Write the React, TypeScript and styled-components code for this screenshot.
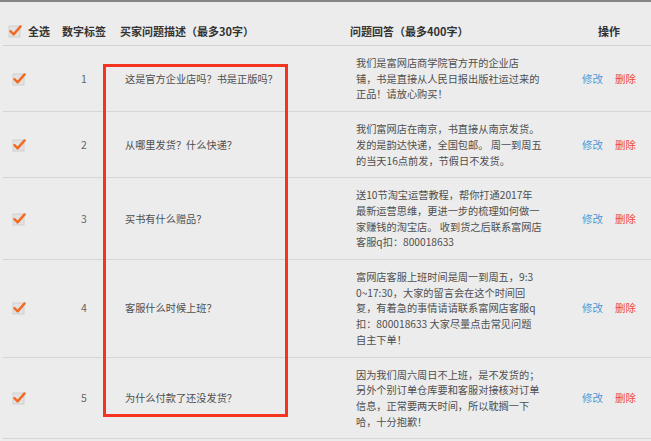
import styled, { createGlobalStyle } from "styled-components";

const GlobalStyle = createGlobalStyle`
    html, body {
        margin: 0;
        padding: 0;
        background-color: #ececec;
    }
    body {
        font-family: "Noto Sans CJK SC", "Noto Sans", sans-serif;
        color: #4f4f4f;
    }
`

const Page = styled.div`
    position: relative;
    width: 651px;
    height: 441px;
    overflow: hidden;
    border-top: 2px solid #858585;
    box-sizing: border-box;
    background-color: #ececec;
`

const Table = styled.div`
    margin-left: 3px;
    width: 648px;
`

const Header = styled.div`
    display: grid;
    grid-template-columns: 47px 68px 227px 225px 78px;
    padding: 22px 0 7px;
    border-bottom: 1px solid #d2d2d2;
    font-size: 11px;
    line-height: 14px;
    font-weight: bold;
    color: #333;
`

const HeadCell = styled.div<{ align?: string; pad?: number }>`
    display: flex;
    align-items: center;
    justify-content: ${(props) => props.align ?? "flex-start"};
    padding-left: ${(props) => props.pad ?? 0}px;
    gap: 6px;
    white-space: nowrap;
`

const Row = styled.div`
    display: grid;
    grid-template-columns: 47px 68px 227px 225px 78px;
    padding: 9px 0;
    border-bottom: 1px solid #d6d6d6;
    font-size: 10.2px;
    line-height: 15.7px;
`

const Cell = styled.div<{ align?: string; pad?: number }>`
    display: flex;
    align-items: center;
    justify-content: ${(props) => props.align ?? "flex-start"};
    padding-left: ${(props) => props.pad ?? 0}px;
    white-space: nowrap;
`

const Num = styled.span`
    color: #666;
    font-size: 10.5px;
`

const Answer = styled.div`
    display: flex;
    flex-direction: column;
`

const Ops = styled.div`
    display: flex;
    gap: 12px;
    font-size: 10.5px;
`

const Link = styled.span<{ danger?: boolean }>`
    color: ${(props) => (props.danger ? "#f0493a" : "#4f97d6")};
    cursor: pointer;
`

const Highlight = styled.div`
    position: absolute;
    left: 103px;
    top: 62px;
    width: 185px;
    height: 353px;
    border: 3px solid #f4341e;
    box-sizing: border-box;
    pointer-events: none;
`

function Check() {
    return (
        <svg width="14" height="14" viewBox="0 0 14 14">
            <rect x="1" y="2" width="11" height="11" fill="#e2e2e2" stroke="#cfcfcf" />
            <path d="M2.5 7.2 L5.6 10.4 L12.6 2.4" fill="none" stroke="#f26a22" strokeWidth="2.4" strokeLinecap="round" strokeLinejoin="round" />
        </svg>
    )
}

interface IFaq {
    question: string,
    answer: string[],
}

const faqs: IFaq[] = [
    {
        question: "这是官方企业店吗？书是正版吗？",
        answer: ["我们是富网店商学院官方开的企业店", "铺，书是直接从人民日报出版社运过来的", "正品！请放心购买！"],
    },
    {
        question: "从哪里发货？什么快递？",
        answer: ["我们富网店在南京，书直接从南京发货。", "发的是韵达快递，全国包邮。 周一到周五", "的当天16点前发，节假日不发货。"],
    },
    {
        question: "买书有什么赠品？",
        answer: ["送10节淘宝运营教程，帮你打通2017年", "最新运营思维，更进一步的梳理如何做一", "家赚钱的淘宝店。 收到货之后联系富网店", "客服q扣：800018633"],
    },
    {
        question: "客服什么时候上班？",
        answer: ["富网店客服上班时间是周一到周五，9:3", "0~17:30，大家的留言会在这个时间回", "复，有着急的事情请请联系富网店客服q", "扣：800018633 大家尽量点击常见问题", "自主下单！"],
    },
    {
        question: "为什么付款了还没发货？",
        answer: ["因为我们周六周日不上班，是不发货的；", "另外个别订单仓库要和客服对接核对订单", "信息，正常要两天时间，所以耽搁一下", "哈，十分抱歉！"],
    },
]

function App() {
    return (
        <>
            <GlobalStyle />
            <Page>
                <Table>
                    <Header>
                        <HeadCell pad={5}><Check />全选</HeadCell>
                        <HeadCell align="center">数字标签</HeadCell>
                        <HeadCell pad={2}>买家问题描述（最多30字）</HeadCell>
                        <HeadCell pad={5}>问题回答（最多400字）</HeadCell>
                        <HeadCell align="center">操作</HeadCell>
                    </Header>
                    {faqs.map((faq, index) => (
                        <Row key={index}>
                            <Cell pad={9}><Check /></Cell>
                            <Cell align="center"><Num>{index + 1}</Num></Cell>
                            <Cell pad={7}>{faq.question}</Cell>
                            <Cell pad={11}>
                                <Answer>
                                    {faq.answer.map((line, i) => (
                                        <span key={i}>{line}</span>
                                    ))}
                                </Answer>
                            </Cell>
                            <Cell align="center">
                                <Ops>
                                    <Link>修改</Link>
                                    <Link danger>删除</Link>
                                </Ops>
                            </Cell>
                        </Row>
                    ))}
                </Table>
                <Highlight />
            </Page>
        </>
    )
}
export default App;
